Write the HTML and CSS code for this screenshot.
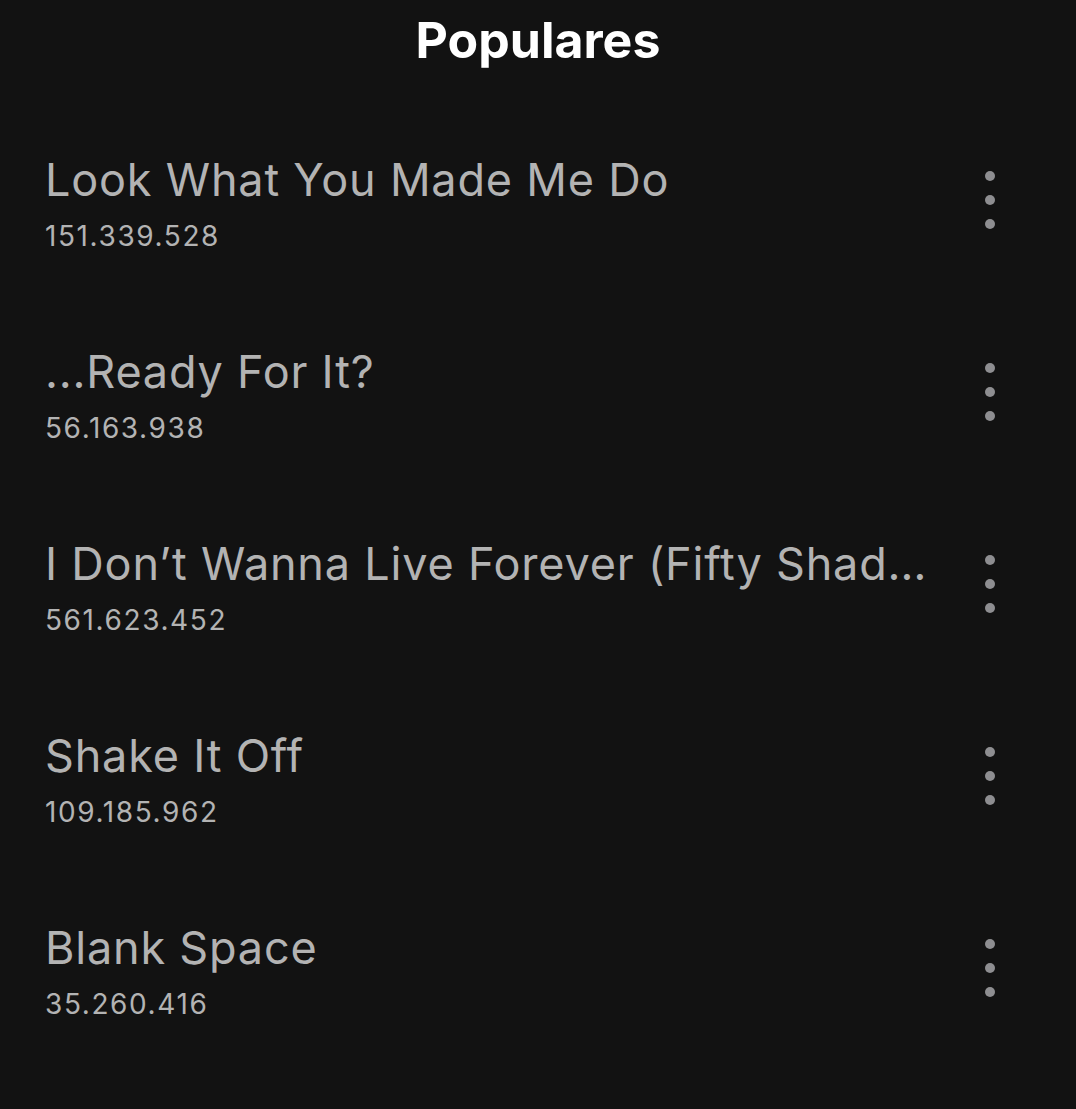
FILE: index.html
```html
<!DOCTYPE html>
<html lang="es">
<head>
<meta charset="utf-8">
<title>Populares</title>
<link rel="stylesheet" href="styles.css">
</head>
<body>
<main class="screen">
  <h1 class="heading">Populares</h1>
  <ul class="tracks">
    <li class="track">
      <div class="info"><div class="name">Look What You Made Me Do</div><div class="plays">151.339.528</div></div>
      <span class="more"><i></i><i></i><i></i></span>
    </li>
    <li class="track">
      <div class="info"><div class="name">...Ready For It?</div><div class="plays">56.163.938</div></div>
      <span class="more"><i></i><i></i><i></i></span>
    </li>
    <li class="track">
      <div class="info"><div class="name">I Don’t Wanna Live Forever (Fifty Shades Darker)</div><div class="plays">561.623.452</div></div>
      <span class="more"><i></i><i></i><i></i></span>
    </li>
    <li class="track">
      <div class="info"><div class="name">Shake It Off</div><div class="plays">109.185.962</div></div>
      <span class="more"><i></i><i></i><i></i></span>
    </li>
    <li class="track">
      <div class="info"><div class="name">Blank Space</div><div class="plays">35.260.416</div></div>
      <span class="more"><i></i><i></i><i></i></span>
    </li>
  </ul>
</main>
</body>
</html>
```
FILE: styles.css
```css
html, body {
  margin: 0;
  padding: 0;
  background: #121212;
}
.screen {
  font-family: Inter, "Noto Sans", sans-serif;
  height: 1109px;
  background: #121212;
}
.heading {
  margin: 0;
  height: 102px;
  box-sizing: border-box;
  padding-top: 10px;
  text-align: center;
  color: #ffffff;
  font-size: 50px;
  line-height: 60px;
  font-weight: 700;
  letter-spacing: 0;
}
.tracks {
  list-style: none;
  margin: 0;
  padding: 0 56px 0 45px;
}
.track {
  height: 192px;
  box-sizing: border-box;
  padding-top: 50px;
  display: flex;
  align-items: flex-start;
  gap: 22px;
}
.info {
  flex: 1;
  min-width: 0;
}
.name {
  color: #b3b3b3;
  font-size: 45px;
  line-height: 56px;
  font-weight: 400;
  white-space: nowrap;
  overflow: hidden;
  text-overflow: ellipsis;
  letter-spacing: 0.8px;
}
.plays {
  margin-top: 10px;
  color: #b3b3b3;
  font-size: 28px;
  line-height: 36px;
  letter-spacing: 1.6px;
}
.more {
  margin-top: 19px;
  width: 60px;
  display: flex;
  flex-direction: column;
  align-items: center;
  gap: 14px;
}
.more i {
  width: 10px;
  height: 10px;
  border-radius: 50%;
  background: #8e8e91;
}
```
